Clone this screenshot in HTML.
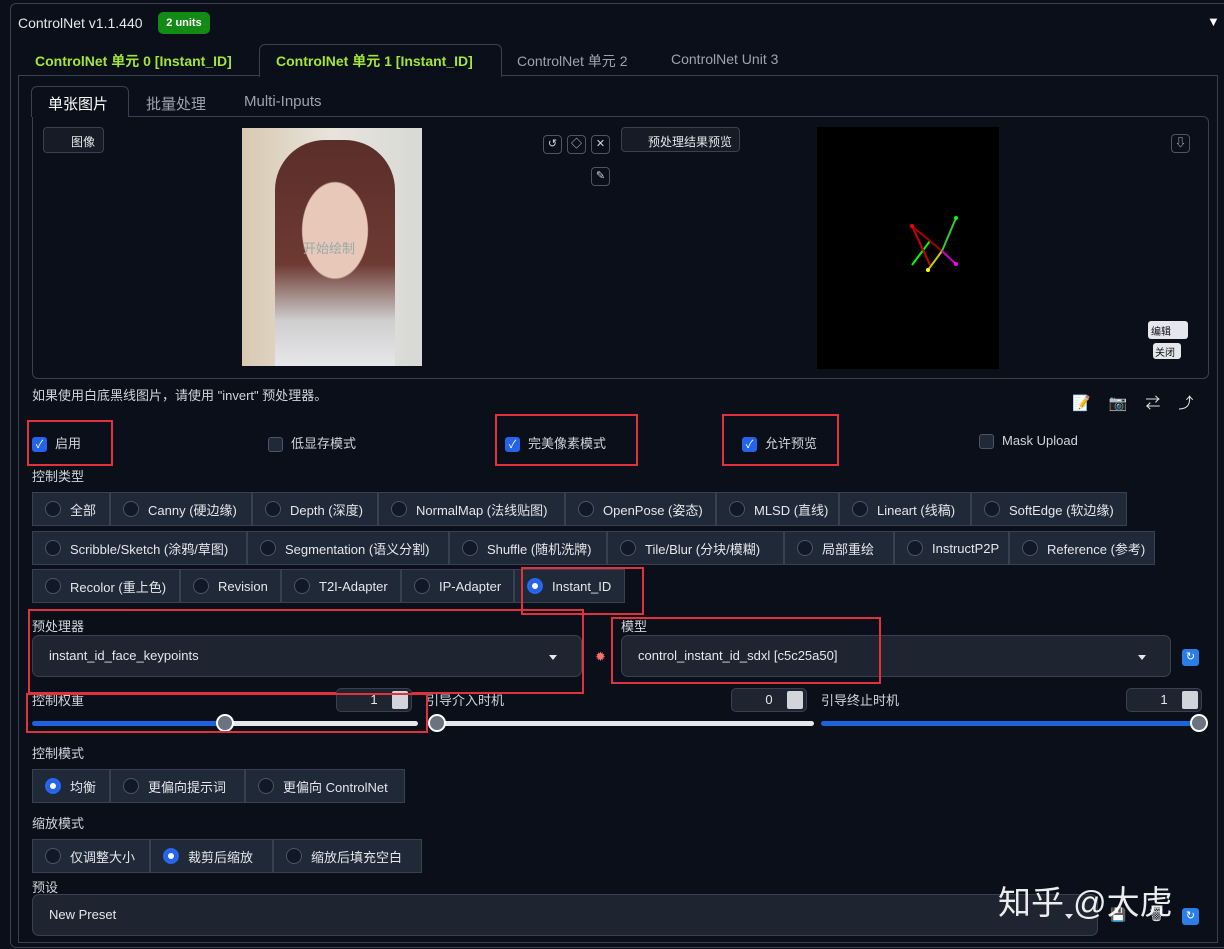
<!DOCTYPE html><html><head><meta charset="utf-8"><style>
*{box-sizing:border-box;margin:0;padding:0}
body{width:1224px;height:949px;background:#0b0f19;font-family:"Liberation Sans","Noto Sans CJK SC",sans-serif;color:#d1d5db;font-size:13px;position:relative;overflow:hidden}
.a{position:absolute}
.box{position:absolute;border:1px solid #374151;border-radius:6px}
.red{position:absolute;border:2px solid #e0323c}
.rb{position:absolute;height:34px;background:#1f2937;border:1px solid #374151;display:flex;align-items:center;padding-left:12px;font-size:13px;color:#e5e7eb;white-space:nowrap}
.rb i{display:inline-block;width:16px;height:16px;border-radius:50%;border:1px solid #4b5563;background:#111827;margin-right:9px}
.rb i.on{background:#2563eb;border-color:#2563eb;box-shadow:inset 0 0 0 4px #2563eb,inset 0 0 0 8px #fff}
.cb{display:inline-block;width:15px;height:15px;border-radius:3px;border:1px solid #4b5563;background:#1f2937;vertical-align:middle;margin-right:8px}
.cb.on{background:#2563eb;border-color:#2563eb;color:#fff;font-size:11px;text-align:center;line-height:14px}
.lbl{position:absolute;font-size:13px;color:#d1d5db}
.dd{position:absolute;height:42px;background:#1f2530;border:1px solid #374151;border-radius:7px;padding-left:16px;line-height:40px;color:#e5e7eb;font-size:13px}
.dd:after{content:"";position:absolute;right:24px;top:19px;border:4px solid transparent;border-top:5px solid #e5e7eb}
.num{position:absolute;width:76px;height:24px;background:#1f2530;border:1px solid #374151;border-radius:5px;text-align:center;line-height:22px;font-size:13px;color:#e5e7eb}
.num:after{content:"";position:absolute;right:3px;top:2px;width:16px;height:18px;background:#d1d5db;border-radius:2px}
.track{position:absolute;height:5px;background:#e5e7eb;border-radius:3px}
.knob{position:absolute;width:18px;height:18px;border-radius:50%;background:#6b7280;border:2px solid #fff}
.ib{position:absolute;width:19px;height:19px;border:1px solid #4b5563;border-radius:4px;color:#d1d5db;font-size:11px;text-align:center;line-height:17px}
</style></head><body>
<div class="box" style="left:10px;top:3px;width:1220px;height:945px"></div>
<div class="a" style="left:18px;top:15px;font-size:14px;color:#e5e7eb">ControlNet v1.1.440</div>
<div class="a" style="left:158px;top:12px;width:52px;height:22px;background:#138a13;border-radius:5px;color:#fff;font-size:11px;font-weight:bold;text-align:center;line-height:22px">2 units</div>
<div class="a" style="left:1207px;top:14px;color:#fff;font-size:13px">▼</div>
<!-- tabs -->
<div class="a" style="left:18px;top:75px;width:1200px;height:1px;background:#374151"></div>
<div class="a" style="left:35px;top:51px;color:#a3e635;font-weight:bold;font-size:14px">ControlNet 单元 0 [Instant_ID]</div>
<div class="a" style="left:259px;top:44px;width:243px;height:33px;border:1px solid #374151;border-bottom:none;border-radius:6px 6px 0 0;background:#0b0f19"></div>
<div class="a" style="left:276px;top:51px;color:#a3e635;font-weight:bold;font-size:14px">ControlNet 单元 1 [Instant_ID]</div>
<div class="a" style="left:517px;top:51px;color:#9ca3af;font-size:14px">ControlNet 单元 2</div>
<div class="a" style="left:671px;top:51px;color:#9ca3af;font-size:14px">ControlNet Unit 3</div>
<div class="a" style="left:18px;top:75px;width:1200px;height:868px;border:1px solid #374151;border-top:none"></div>
<!-- inner tabs -->
<div class="a" style="left:31px;top:86px;width:98px;height:31px;border:1px solid #374151;border-bottom:none;border-radius:6px 6px 0 0;background:#0b0f19;z-index:2"></div>
<div class="a" style="left:48px;top:93px;color:#fff;font-size:15px;z-index:3">单张图片</div>
<div class="a" style="left:146px;top:93px;color:#9ca3af;font-size:15px">批量处理</div>
<div class="a" style="left:244px;top:93px;color:#9ca3af;font-size:15px">Multi-Inputs</div>
<div class="a" style="left:32px;top:116px;width:1177px;height:263px;border:1px solid #374151;border-radius:0 6px 6px 6px"></div>
<div class="a" style="left:43px;top:127px;width:61px;height:26px;background:#161b26;border:1px solid #374151;border-radius:4px;font-size:12px;color:#e5e7eb;padding:5px 0 0 27px">图像</div>
<div class="a" style="left:242px;top:128px;width:180px;height:238px;background:linear-gradient(90deg,#d8c9b0 0%,#e8e4dc 50%,#d7d9d6 100%)"></div>
<div class="a" style="left:275px;top:140px;width:120px;height:226px;background:radial-gradient(ellipse 45% 35% at 50% 40%,#e8c8b8 60%,transparent 62%),linear-gradient(180deg,#5a2e2a 0%,#6e3a32 55%,#cfcfd0 80%,#e7e7e9 100%);border-radius:50px 50px 0 0"></div>
<div class="a" style="left:303px;top:238px;color:#9aa;font-size:13px">开始绘制</div>
<div class="ib" style="left:543px;top:135px">↺</div><div class="ib" style="left:567px;top:135px">◇</div><div class="ib" style="left:591px;top:135px">✕</div>
<div class="ib" style="left:591px;top:167px">✎</div>
<div class="a" style="left:621px;top:127px;width:119px;height:25px;background:#161b26;border:1px solid #374151;border-radius:4px;font-size:12px;color:#e5e7eb;padding:5px 0 0 26px">预处理结果预览</div>
<div class="a" style="left:817px;top:127px;width:182px;height:242px;background:#000">
<svg width="182" height="242"><line x1="95" y1="138" x2="113" y2="114" stroke="#0f0" stroke-width="2"/><line x1="113" y1="138" x2="95" y2="99" stroke="#c00" stroke-width="2"/><line x1="95" y1="99" x2="125" y2="124" stroke="#a00" stroke-width="2"/><line x1="125" y1="124" x2="139" y2="91" stroke="#3c3" stroke-width="2"/><line x1="125" y1="124" x2="111" y2="143" stroke="#cc0" stroke-width="2"/><line x1="125" y1="124" x2="139" y2="137" stroke="#c0c" stroke-width="2"/><circle cx="95" cy="99" r="2" fill="#f00"/><circle cx="139" cy="91" r="2" fill="#0f0"/><circle cx="111" cy="143" r="2" fill="#ff0"/><circle cx="139" cy="137" r="2" fill="#f0f"/></svg></div>
<div class="ib" style="left:1171px;top:134px">⇩</div>
<div class="a" style="left:1148px;top:321px;width:40px;height:18px;background:#e5e7eb;border-radius:3px;color:#111;font-size:10px;padding:2px 3px">编辑</div>
<div class="a" style="left:1153px;top:343px;width:28px;height:16px;background:#e5e7eb;border-radius:3px;color:#111;font-size:10px;padding:1px 2px">关闭</div>
<div class="lbl" style="left:32px;top:385px">如果使用白底黑线图片，请使用 "invert" 预处理器。</div>
<div class="a" style="left:1072px;top:392px;color:#ddd;font-size:15px;letter-spacing:18px">📝📷⇄⤴</div>
<!-- checkboxes -->
<div class="lbl" style="left:32px;top:433px"><span class="cb on">✓</span>启用</div>
<div class="lbl" style="left:268px;top:433px"><span class="cb"></span>低显存模式</div>
<div class="lbl" style="left:505px;top:433px"><span class="cb on">✓</span>完美像素模式</div>
<div class="lbl" style="left:742px;top:433px"><span class="cb on">✓</span>允许预览</div>
<div class="lbl" style="left:979px;top:433px"><span class="cb"></span>Mask Upload</div>
<div class="red" style="left:27px;top:420px;width:86px;height:46px"></div>
<div class="red" style="left:495px;top:414px;width:143px;height:52px"></div>
<div class="red" style="left:722px;top:414px;width:117px;height:52px"></div>
<div class="lbl" style="left:32px;top:466px">控制类型</div>
<div class="rb" style="left:32px;top:492px;width:78px"><i></i>全部</div>
<div class="rb" style="left:110px;top:492px;width:142px"><i></i>Canny (硬边缘)</div>
<div class="rb" style="left:252px;top:492px;width:126px"><i></i>Depth (深度)</div>
<div class="rb" style="left:378px;top:492px;width:187px"><i></i>NormalMap (法线贴图)</div>
<div class="rb" style="left:565px;top:492px;width:151px"><i></i>OpenPose (姿态)</div>
<div class="rb" style="left:716px;top:492px;width:123px"><i></i>MLSD (直线)</div>
<div class="rb" style="left:839px;top:492px;width:132px"><i></i>Lineart (线稿)</div>
<div class="rb" style="left:971px;top:492px;width:156px"><i></i>SoftEdge (软边缘)</div>
<div class="rb" style="left:32px;top:531px;width:215px"><i></i>Scribble/Sketch (涂鸦/草图)</div>
<div class="rb" style="left:247px;top:531px;width:202px"><i></i>Segmentation (语义分割)</div>
<div class="rb" style="left:449px;top:531px;width:158px"><i></i>Shuffle (随机洗牌)</div>
<div class="rb" style="left:607px;top:531px;width:177px"><i></i>Tile/Blur (分块/模糊)</div>
<div class="rb" style="left:784px;top:531px;width:110px"><i></i>局部重绘</div>
<div class="rb" style="left:894px;top:531px;width:115px"><i></i>InstructP2P</div>
<div class="rb" style="left:1009px;top:531px;width:146px"><i></i>Reference (参考)</div>
<div class="rb" style="left:32px;top:569px;width:148px"><i></i>Recolor (重上色)</div>
<div class="rb" style="left:180px;top:569px;width:101px"><i></i>Revision</div>
<div class="rb" style="left:281px;top:569px;width:120px"><i></i>T2I-Adapter</div>
<div class="rb" style="left:401px;top:569px;width:113px"><i></i>IP-Adapter</div>
<div class="rb" style="left:514px;top:569px;width:111px"><i class="on"></i>Instant_ID</div>
<div class="red" style="left:521px;top:567px;width:123px;height:48px"></div>
<!-- dropdowns -->
<div class="lbl" style="left:32px;top:616px">预处理器</div>
<div class="dd" style="left:32px;top:635px;width:550px">instant_id_face_keypoints</div>
<div class="red" style="left:28px;top:609px;width:556px;height:85px"></div>
<div class="a" style="left:595px;top:649px;color:#f87171;font-size:13px">✹</div>
<div class="lbl" style="left:621px;top:616px">模型</div>
<div class="dd" style="left:621px;top:635px;width:550px">control_instant_id_sdxl [c5c25a50]</div>
<div class="red" style="left:611px;top:617px;width:270px;height:67px"></div>
<div class="a" style="left:1182px;top:649px;width:17px;height:17px;background:#2b7de9;border-radius:3px;color:#fff;font-size:11px;text-align:center;line-height:17px">↻</div>
<!-- sliders -->
<div class="lbl" style="left:32px;top:690px">控制权重</div>
<div class="num" style="left:336px;top:688px">1</div>
<div class="lbl" style="left:426px;top:690px">引导介入时机</div>
<div class="num" style="left:731px;top:688px">0</div>
<div class="lbl" style="left:821px;top:690px">引导终止时机</div>
<div class="num" style="left:1126px;top:688px">1</div>
<div class="track" style="left:32px;top:721px;width:386px;background:linear-gradient(90deg,#1d63dc 50%,#e5e7eb 50%)"></div>
<div class="knob" style="left:216px;top:714px"></div>
<div class="red" style="left:26px;top:693px;width:402px;height:40px"></div>
<div class="track" style="left:428px;top:721px;width:386px"></div>
<div class="knob" style="left:428px;top:714px"></div>
<div class="track" style="left:821px;top:721px;width:386px;background:#1d63dc"></div>
<div class="knob" style="left:1190px;top:714px"></div>
<div class="lbl" style="left:32px;top:743px">控制模式</div>
<div class="rb" style="left:32px;top:769px;width:78px"><i class="on"></i>均衡</div>
<div class="rb" style="left:110px;top:769px;width:135px"><i></i>更偏向提示词</div>
<div class="rb" style="left:245px;top:769px;width:160px"><i></i>更偏向 ControlNet</div>
<div class="lbl" style="left:32px;top:813px">缩放模式</div>
<div class="rb" style="left:32px;top:839px;width:118px"><i></i>仅调整大小</div>
<div class="rb" style="left:150px;top:839px;width:123px"><i class="on"></i>裁剪后缩放</div>
<div class="rb" style="left:273px;top:839px;width:149px"><i></i>缩放后填充空白</div>
<div class="lbl" style="left:32px;top:877px">预设</div>
<div class="dd" style="left:32px;top:894px;width:1066px">New Preset</div>
<div class="a" style="left:1110px;top:907px;color:#ddd;font-size:13px">💾</div>
<div class="a" style="left:1148px;top:907px;color:#ddd;font-size:13px">🗑</div>
<div class="a" style="left:1182px;top:908px;width:17px;height:17px;background:#2b7de9;border-radius:3px;color:#fff;font-size:11px;text-align:center;line-height:17px">↻</div>
<div class="a" style="left:998px;top:876px;color:#fff;font-size:33px;opacity:.92">知乎 @大虎</div>
</body></html>
